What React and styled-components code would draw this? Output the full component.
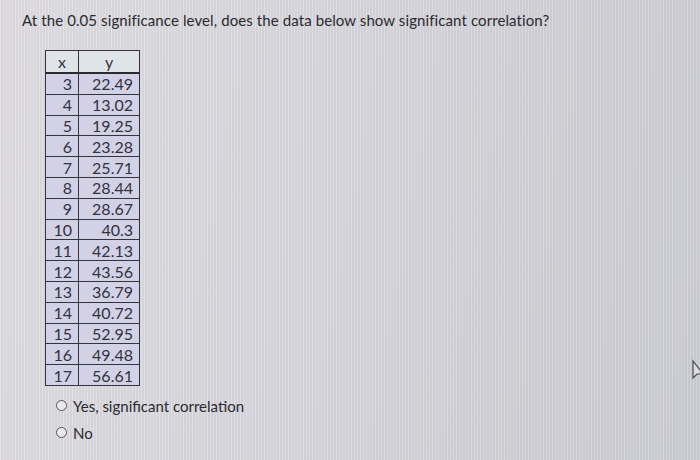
import React from 'react';
import styled, { createGlobalStyle } from 'styled-components';

const GlobalStyle = createGlobalStyle`
  html, body {
    margin: 0;
    padding: 0;
  }
  body {
    font-family: Lato, "Liberation Sans", sans-serif;
  }
`;

const Screen = styled.div`
  position: relative;
  width: 700px;
  height: 460px;
  overflow: hidden;
  box-sizing: border-box;
  padding: 10px 0 0 22px;
  color: #2b2a31;
  background:
    repeating-linear-gradient(90deg, rgba(255,255,255,0.10) 0 1px, rgba(0,0,0,0.035) 1px 3px),
    linear-gradient(100deg, #e1dfe3 0%, #dad9df 40%, #d2d2d8 75%, #cecfd6 100%);
`;

const Question = styled.div`
  font-size: 15px;
  line-height: 20px;
  letter-spacing: 0.1px;
`;

const DataTable = styled.table`
  margin: 20px 0 0 23px;
  border-collapse: collapse;
  font-size: 16px;
  line-height: 19px;
  color: #33323d;

  th, td {
    border: 1px solid #34343c;
    padding: 0 6px;
  }
  th {
    background: #dfe4e9;
    font-weight: 400;
    text-align: center;
    height: 21px;
    border-bottom: 2px solid #2a2a30;
  }
  td {
    background: #d2d1e6;
    text-align: right;
    height: 19.8px;
  }
`;

const XCell = styled.td`
  width: 20px;
`;

const YCell = styled.td`
  width: 48px;
`;

const Options = styled.div`
  margin: 10px 0 0 34px;
  display: flex;
  flex-direction: column;
  gap: 7px;
`;

const Option = styled.label`
  display: flex;
  align-items: center;
  gap: 6px;
  font-size: 15px;
  line-height: 20px;
`;

const Radio = styled.span`
  width: 9px;
  height: 9px;
  border: 1.3px solid #55545c;
  border-radius: 50%;
  background: #eceaee;
`;

const Pointer = styled.svg`
  position: absolute;
  left: 689px;
  top: 359px;
`;

const rows = [
  [3, '22.49'], [4, '13.02'], [5, '19.25'], [6, '23.28'], [7, '25.71'],
  [8, '28.44'], [9, '28.67'], [10, '40.3'], [11, '42.13'], [12, '43.56'],
  [13, '36.79'], [14, '40.72'], [15, '52.95'], [16, '49.48'], [17, '56.61'],
];

export default function App() {
  return (
    <>
      <GlobalStyle />
      <Screen>
        <Question>At the 0.05 significance level, does the data below show significant correlation?</Question>
        <DataTable>
          <thead>
            <tr><th>x</th><th>y</th></tr>
          </thead>
          <tbody>
            {rows.map(([x, y]) => (
              <tr key={x}>
                <XCell>{x}</XCell>
                <YCell>{y}</YCell>
              </tr>
            ))}
          </tbody>
        </DataTable>
        <Options>
          <Option><Radio />Yes, significant correlation</Option>
          <Option><Radio />No</Option>
        </Options>
        <Pointer width="14" height="24" viewBox="0 0 14 24">
          <path d="M4 2 L4 19 L8 15 L14 15 Z" fill="#dcdbe2" stroke="#4a4a55" strokeWidth="1.2" />
        </Pointer>
      </Screen>
    </>
  );
}
